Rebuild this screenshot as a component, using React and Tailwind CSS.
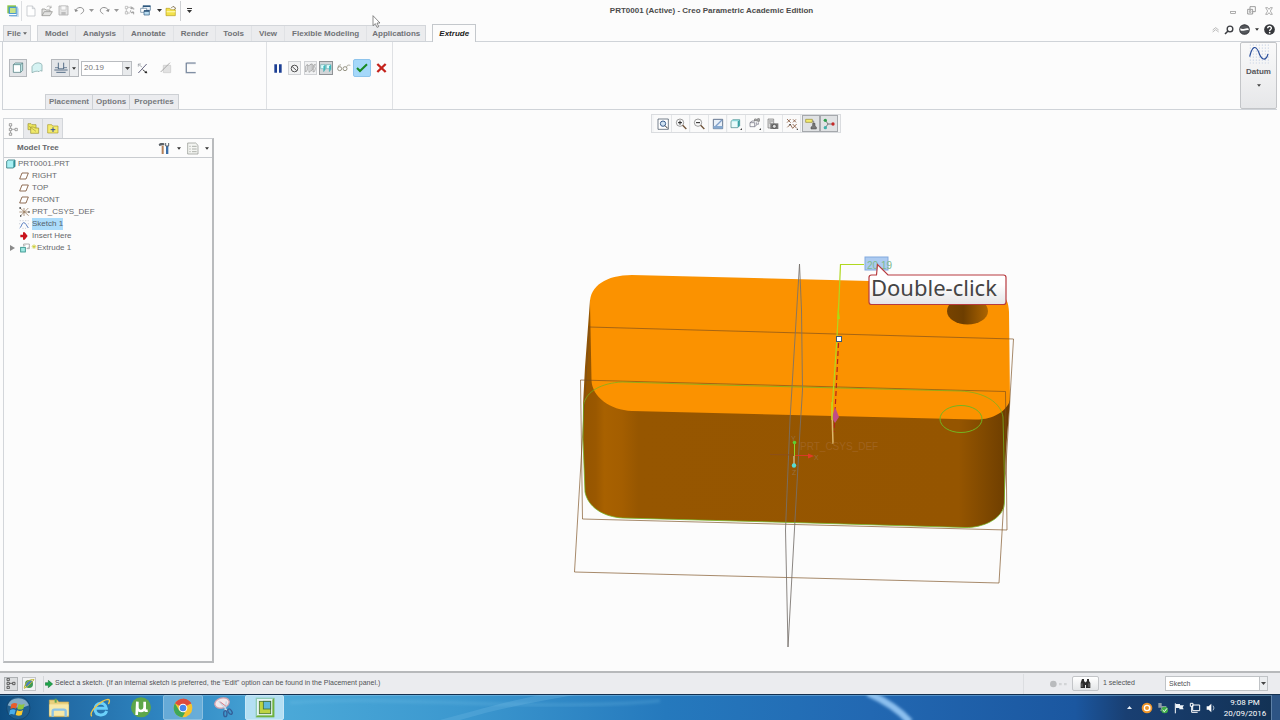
import React from "react";

function Icon({ w, h, box, children, className = "" }) {
  return (
    <svg width={w} height={h} viewBox={box || `0 0 ${w * 3} ${h * 3}`} className={`shrink-0 ${className}`} aria-hidden="true" fill="none">
      {children}
    </svg>
  );
}

function Caret({ color = "#333" }) {
  return (
    <Icon w={5} h={3} box="0 0 5 3">
      <path d="M0 0h5L2.5 3z" fill={color} />
    </Icon>
  );
}

function IconButton({ label, className = "", children }) {
  return (
    <button type="button" aria-label={label} className={`flex shrink-0 items-center justify-center ${className}`}>
      {children}
    </button>
  );
}

const AppIcon = () => (
  <Icon w={12} h={12}>
    <rect x="1" y="1" width="26" height="24" fill="#8cc63f" />
    <rect x="5" y="5" width="24" height="22" fill="#4a9ad4" />
    <rect x="9" y="9" width="17" height="15" fill="#c6e48a" />
    <path d="M30 5v27H6" stroke="#5b9bd0" strokeWidth="3" />
    <path d="M34 10v25H10" stroke="#a9cbe6" strokeWidth="2" />
  </Icon>
);

const NewIcon = () => (
  <Icon w={10} h={12}>
    <path d="M3 3h16l8 8v22H3zM19 3v8h8" stroke="#c2c5ca" strokeWidth="2.5" fill="#fff" />
  </Icon>
);
const OpenIcon = () => (
  <Icon w={12} h={12}>
    <path d="M3 32V12h9l3 3h12v5M3 32l7-12h24l-7 12z" stroke="#9a9a98" strokeWidth="2.5" fill="#e2e2e0" />
    <path d="M17 6c5-5 11-3 13 3m0-7v7h-6" stroke="#9a9a98" strokeWidth="2" />
  </Icon>
);
const SaveIcon = () => (
  <Icon w={11} h={11}>
    <path d="M3 3h27v27H3z" fill="#e4e4e4" stroke="#b0b0b0" strokeWidth="2.5" />
    <path d="M9 3h15v12H9z" fill="#f8f8f8" stroke="#b5b5b5" strokeWidth="1.5" />
    <path d="M10 21h13v9H10z" fill="#bdbdbd" />
  </Icon>
);
const UndoIcon = () => (
  <Icon w={11} h={9}>
    <path d="M4 14C10 1 28 2 29 13c0 6-5 8-9 11" stroke="#8c8c8c" strokeWidth="3" />
    <path d="M1 8l3 10 9-4z" fill="#8c8c8c" />
  </Icon>
);
const RedoIcon = () => (
  <Icon w={11} h={9}>
    <path d="M29 14C23 1 5 2 4 13c0 6 5 8 9 11" stroke="#8c8c8c" strokeWidth="3" />
    <path d="M32 8l-3 10-9-4z" fill="#8c8c8c" />
  </Icon>
);
const RegenIcon = () => (
  <Icon w={11} h={11}>
    <path d="M4 4h7v7H4zM4 20h7v7H4zM11 7h7M7 11v9M11 24h7" stroke="#ababab" strokeWidth="2" />
    <path d="M20 10c6-6 11 0 9 4m-9 2c-3 6 3 10 8 6M21 4v7h6M29 28v-7h-6" stroke="#8f8f8f" strokeWidth="2.5" />
  </Icon>
);
const WindowsIcon = () => (
  <Icon w={12} h={11}>
    <path d="M9 2h22v14H9z" fill="#eef4fa" stroke="#3f6689" strokeWidth="2" />
    <path d="M9 4h22" stroke="#2c577e" strokeWidth="4" />
    <path d="M2 10h18v12H2z" fill="#fff" stroke="#5c7c96" strokeWidth="2" />
    <path d="M12 17h16v13H12z" fill="#b9dcf0" stroke="#2c577e" strokeWidth="2" />
    <path d="M12 18h16" stroke="#20486e" strokeWidth="4" />
  </Icon>
);
const FolderIcon = () => (
  <Icon w={12} h={12}>
    <path d="M3 10h11l3 4h14v18H3z" fill="#f3e24c" stroke="#b89f22" strokeWidth="2" />
    <path d="M5 20h26" stroke="#fdf6a0" strokeWidth="4" />
    <path d="M18 10l6-6 8 5-4 5" stroke="#77653c" strokeWidth="2.5" />
  </Icon>
);

const menuTabs = ["Model", "Analysis", "Annotate", "Render", "Tools", "View", "Flexible Modeling", "Applications"];

function TitleBar() {
  return (
    <header className="flex h-6 shrink-0 items-center pb-[3px] pl-[7px]">
      <div className="flex flex-1 items-center">
        <AppIcon />
        <span className="mr-px ml-0.5 h-5 w-px bg-[#dcdee1]" />
        <IconButton label="New" className="w-4"><NewIcon /></IconButton>
        <IconButton label="Open" className="w-4"><OpenIcon /></IconButton>
        <IconButton label="Save" className="w-4"><SaveIcon /></IconButton>
        <IconButton label="Undo" className="w-4"><UndoIcon /></IconButton>
        <IconButton label="Undo list" className="w-[9px]"><Caret color="#999" /></IconButton>
        <IconButton label="Redo" className="w-4"><RedoIcon /></IconButton>
        <IconButton label="Redo list" className="w-[9px]"><Caret color="#999" /></IconButton>
        <IconButton label="Regenerate" className="w-4"><RegenIcon /></IconButton>
        <IconButton label="Windows" className="w-[18px]"><WindowsIcon /></IconButton>
        <IconButton label="Windows list" className="w-2"><Caret /></IconButton>
        <IconButton label="Close" className="w-4"><FolderIcon /></IconButton>
        <span className="mr-1 ml-px h-5 w-px bg-[#cfd1d4]" />
        <IconButton label="Customize toolbar" className="w-2">
          <Icon w={5} h={5} box="0 0 5 5"><path d="M0 .5h5" stroke="#333" /><path d="M0 2h5L2.500 5z" fill="#333" /></Icon>
        </IconButton>
      </div>
      <h1 className="pl-[140px] text-[8px] font-bold text-[#4b4b4b]">PRT0001 (Active) - Creo Parametric Academic Edition</h1>
      <div className="flex flex-1 items-center justify-end gap-1 pr-1">
        <IconButton label="Minimize" className="w-3.5">
          <Icon w={6} h={10} box="0 0 18 30"><rect x="2" y="16" width="14" height="6" stroke="#888" strokeWidth="2" /></Icon>
        </IconButton>
        <IconButton label="Restore" className="w-3.5">
          <Icon w={9} h={9}><path d="M9 2h16v15H9z" fill="#fff" stroke="#888" strokeWidth="2.500" /><path d="M2 10h15v14H2z" fill="#fff" stroke="#888" strokeWidth="2.500" /><path d="M7 14h5v5H7z" stroke="#888" strokeWidth="2" /></Icon>
        </IconButton>
        <IconButton label="Close window" className="w-3.5">
          <Icon w={8} h={8}><path d="M2 2h6l4 5 4-5h6l-6 10 6 10h-6l-4-5-4 5H2l6-10z" fill="#fff" stroke="#888" strokeWidth="2" /></Icon>
        </IconButton>
      </div>
    </header>
  );
}

function MenuRow() {
  return (
    <div className="flex h-[18px] shrink-0 items-end text-[8px] font-bold text-[#707276]">
      <div className="flex h-[18px] flex-1 items-end border-b border-[#cfd3d8] pl-[3px]">
        <button type="button" className="flex h-4 w-7 items-center justify-center gap-[2px] border border-b-0 border-[#d3d6da] bg-[#ebecee]">
          File <Icon w={4} h={3} box="0 0 5 3"><path d="M0 0h5L2.500 3z" fill="#666" /></Icon>
        </button>
        <nav className="ml-1.5 flex h-4 border border-b-0 border-[#d3d6da] bg-[#ebecee]">
          {menuTabs.map((t) => (
            <button type="button" key={t} className="border-r border-[#e0e2e5] px-[7px] last:border-r-0 last:px-[5px]">{t}</button>
          ))}
        </nav>
        <button type="button" className="-mb-px ml-1.5 h-[18px] w-11 border border-b-0 border-[#c4c8cc] bg-[#fcfcfc] text-[#222] italic">Extrude</button>
      </div>
      <div className="flex h-[18px] items-center gap-[3px] border-b border-[#cfd3d8] pr-[5px] pb-1.5">
        <IconButton label="Collapse ribbon" className="mr-px"><Icon w={8} h={6}><path d="M2 9l9-7 9 7M2 15l9-7 9 7" stroke="#999" strokeWidth="2" /></Icon></IconButton>
        <IconButton label="Search"><Icon w={10} h={10}><circle cx="18" cy="12" r="8.500" stroke="#3b3d42" strokeWidth="4" /><path d="M12 18l-9 9" stroke="#3b3d42" strokeWidth="5" /></Icon></IconButton>
        <IconButton label="Resources" className="ml-0.5"><Icon w={11} h={11}><circle cx="16.500" cy="16.500" r="14" stroke="#3b3d42" strokeWidth="4" fill="#55585c" /><path d="M4 13c8 6 17-4 25 1v5c-8-4-17 5-25 0z" fill="#fff" /></Icon></IconButton>
        <span className="mx-0.5"><Icon w={4} h={3} box="0 0 5 3"><path d="M0 0h5L2.500 3z" fill="#333" /></Icon></span>
        <IconButton label="Help"><Icon w={11} h={11}><circle cx="16.500" cy="16.500" r="16" fill="#36383c" /><path d="M11 13c0-8 12-7 11 0-1 4-5 4-5 8" stroke="#fff" strokeWidth="4" /><circle cx="17" cy="26" r="2.500" fill="#fff" /></Icon></IconButton>
      </div>
    </div>
  );
}

function Ribbon() {
  return (
    <section className="mr-[3px] ml-[2px] flex h-[68px] shrink-0 border-b border-l border-[#cfd3d8]">
      <div className="flex w-[264px] flex-col justify-between border-r border-[#dfe1e4] pt-4">
        <div className="flex h-5 items-center pl-1.5">
          <IconButton label="Extrude as solid" className="h-[18px] w-[18px] border border-[#b5b8bc] bg-[#e3e5e8]">
            <Icon w={12} h={12}><path d="M4 8l6-5h22v22l-6 6H4z" fill="#c8eff0" stroke="#4b7275" strokeWidth="2" /><path d="M4 8h22v23M26 8l6-5" stroke="#4b7275" strokeWidth="2" /><path d="M6 10h18v19H6z" fill="#fff" /></Icon>
          </IconButton>
          <IconButton label="Extrude as surface" className="ml-0.5 h-[18px] w-4">
            <Icon w={12} h={12}><path d="M3 14c8-14 24-14 30-6v20c-3-3-6-3-9 1-6-3-12-1-21 3z" fill="#d6f3f3" stroke="#7aa0a2" strokeWidth="2" /></Icon>
          </IconButton>
          <IconButton label="Depth option" className="ml-1.5 h-[18px] w-[19px] border border-[#b5b8bc] bg-[#e3e5e8]">
            <Icon w={14} h={12}><path d="M13 2v19M29 2v19M1 24h40M7 31h28" stroke="#3a5673" strokeWidth="2.500" /><path d="M13 20h16M3 17h10M29 17h10" stroke="#3a5673" strokeWidth="2" /></Icon>
          </IconButton>
          <IconButton label="Depth list" className="h-[18px] w-[9px] border border-l-0 border-[#b5b8bc] bg-[#eceef0]"><Icon w={4} h={3} box="0 0 5 3"><path d="M0 0h5L2.500 3z" fill="#333" /></Icon></IconButton>
          <div className="ml-0.5 flex h-[15px] w-[51px] border border-[#b9bcc0] bg-white">
            <input aria-label="Depth" defaultValue="20.19" className="w-0 flex-1 bg-transparent pl-[2px] text-[8px] text-[#777] outline-none" />
            <IconButton label="Recent depths" className="w-[9px] border-l border-[#c9ccd0] bg-[#e8eaec]"><Caret color="#444" /></IconButton>
          </div>
          <IconButton label="Flip direction" className="ml-1 w-3">
            <Icon w={11} h={11}><path d="M4 30L29 3" stroke="#446" strokeWidth="2.500" /><path d="M15 12L4 4m0 7V3h8" stroke="#8d9298" strokeWidth="2" /><path d="M17 20l10 8" stroke="#222" strokeWidth="2.500" /><path d="M31 31l-9-1 6-7z" fill="#222" /></Icon>
          </IconButton>
          <IconButton label="Remove material" className="ml-3 w-3">
            <Icon w={12} h={12}><path d="M10 10h22v22H10z" fill="#e2e2e2" stroke="#c9c9c9" strokeWidth="2" /><path d="M2 30L30 2" stroke="#8a8a8a" strokeWidth="2" /></Icon>
          </IconButton>
          <IconButton label="Thicken sketch" className="ml-3 w-3">
            <Icon w={11} h={12}><path d="M32 4H3v28h29" stroke="#d8dade" strokeWidth="5" /><path d="M32 3H4v29h28" stroke="#5a6f8c" strokeWidth="2.500" /></Icon>
          </IconButton>
        </div>
        <div className="ml-[42px] flex h-[15px] self-start border border-b-0 border-[#cdd0d4] bg-[#ebecef] text-[8px] font-bold text-[#777a7e]">
          <button type="button" className="px-[3px]">Placement</button>
          <button type="button" className="border-x border-[#cdd0d4] px-[3px]">Options</button>
          <button type="button" className="px-1">Properties</button>
        </div>
      </div>
      <div className="flex w-[126px] items-start border-r border-[#dfe1e4] pt-4 pl-[3px]">
        <div className="flex h-5 items-center">
          <IconButton label="Pause" className="w-4"><Icon w={8} h={9}><path d="M1 1h8v25H1zM15 1h8v25h-8z" fill="#1c3f94" /></Icon></IconButton>
          <IconButton label="No preview" className="ml-0.5 h-3.5 w-[13px] border border-[#d0d2d5] bg-[#f1f2f3]"><Icon w={9} h={9}><circle cx="13.500" cy="13.500" r="10" stroke="#555" strokeWidth="3" /><path d="M6 7l14 13" stroke="#555" strokeWidth="3" /></Icon></IconButton>
          <IconButton label="Unattached preview" className="ml-[3px] h-3.5 w-[13px] border border-[#d0d2d5] bg-[#f1f2f3]"><Icon w={11} h={10}><path d="M2 10l5-6v17l-5 6zM12 8l6-5v20l-6 5zM12 8H8M18 3h4v18l-4 3M26 6l5-2-2 7 2 5-2 9-5 2z" stroke="#777" strokeWidth="1.500" /></Icon></IconButton>
          <IconButton label="Attached preview" className="ml-[2px] h-3.5 w-[14px] border border-[#8f9295] bg-[#d2d5d8]"><Icon w={12} h={10}><path d="M2 5h14v14l-5 7v-9H2zM19 5h14v14l-5 7v-9h-9z" fill="#dff" stroke="#4a9a9d" strokeWidth="1.500" /><path d="M10 10l6-5v14l-5 7zM27 10l6-5v14l-5 7z" fill="#3fb8bd" /></Icon></IconButton>
          <IconButton label="Verify" className="ml-1 w-[14px]"><Icon w={14} h={8}><circle cx="8" cy="14" r="6" stroke="#83806e" strokeWidth="2.500" /><circle cx="24" cy="14" r="6" stroke="#83806e" strokeWidth="2.500" /><path d="M3 10C5 2 9 2 12 3M29 10c1-8 5-7 11-6" stroke="#83806e" strokeWidth="2" /></Icon></IconButton>
          <IconButton label="Accept" className="ml-0.5 h-[18px] w-[18px] rounded-xs border border-[#8ec4ec] bg-[#a5d8fa]"><Icon w={12} h={10}><path d="M3 15l9 9L33 4" stroke="#178a22" strokeWidth="6" /></Icon></IconButton>
          <IconButton label="Cancel" className="ml-1 w-3"><Icon w={11} h={10}><path d="M4 3l25 24M29 3L4 27" stroke="#c4221c" strokeWidth="7" /></Icon></IconButton>
        </div>
      </div>
      <div className="flex-1" />
      <button type="button" className="flex w-[37px] flex-col items-center rounded-xs border border-[#c3c5c8] bg-linear-to-b from-[#fafafa] to-[#e6e7e9] pt-px text-[8px] font-bold text-[#55575a]">
        <Icon w={20} h={20}>
          {[4, 13, 22, 31, 40, 49, 58].map((x) => (
            <path key={x} d={`M${x} 2v56`} stroke="#9db3d6" strokeWidth="2.500" strokeDasharray="2.500 6.500" />
          ))}
          <path d="M2 38C10 4 20 4 29 24c8 26 22 28 28 6" stroke="#2b4f9c" strokeWidth="3.500" />
        </Icon>
        <span className="mt-0.5 h-3 leading-3">Datum</span>
        <span className="mt-1.5"><Icon w={4} h={3} box="0 0 5 3"><path d="M0 0h5L2.500 3z" fill="#444" /></Icon></span>
      </button>
    </section>
  );
}

const PartIcon = () => (
  <Icon w={10} h={10}><path d="M2 7l5-4h20v19l-5 5H2z" fill="#a8f0f4" stroke="#33797e" strokeWidth="2.500" /><path d="M22 27V7l5-4v19z" fill="#2f8f97" /></Icon>
);
const PlaneIcon = () => (
  <Icon w={10} h={8}><path d="M9 3h19l-7 18H2z" fill="#fff" stroke="#7c5335" strokeWidth="2.500" /></Icon>
);
const CsysIcon = () => (
  <Icon w={11} h={10}><path d="M3 3l26 23M4 27L28 3M1 15h30M15 3v24" stroke="#8d6b48" strokeWidth="2" /><path d="M1 3h5M28 15h4M3 27h4" stroke="#444" strokeWidth="4" /></Icon>
);
const SketchIcon = () => (
  <Icon w={10} h={9}><path d="M2 2h4m4 0h4m4 0h4m4 0h3M2 9v4M28 9v4M10 25h4m4 0h3" stroke="#b8bec8" strokeWidth="2" /><path d="M2 24C8 22 8 8 14 8s8 8 14 16" stroke="#3a66b5" strokeWidth="2.500" /></Icon>
);
const InsertIcon = () => (
  <Icon w={8} h={8}><path d="M1 8h8V1h5l9 11-9 11H9v-7H1z" fill="#c8141d" /></Icon>
);
const ExtrudeIcon = () => (
  <Icon w={10} h={10}><path d="M11 9V3h17v14h-6" fill="#fff" stroke="#888" strokeWidth="2" /><path d="M11 11l6-6M20 18l7-7" stroke="#777" strokeWidth="1.500" /><rect x="2" y="13" width="14" height="14" fill="#9fe8e2" stroke="#2c8f86" strokeWidth="2.500" /></Icon>
);

const treeItems = [
  ["RIGHT", PlaneIcon],
  ["TOP", PlaneIcon],
  ["FRONT", PlaneIcon],
  ["PRT_CSYS_DEF", CsysIcon],
  ["Sketch 1", SketchIcon],
  ["Insert Here", InsertIcon],
];

function ModelTree() {
  return (
    <aside className="flex w-[211px] shrink-0 flex-col">
      <div className="flex h-5 w-[60px] border border-b-0 border-[#d3d6da] bg-[#e9eaed]">
        <IconButton label="Model tree" className="h-5 flex-1 bg-[#fcfcfc]"><Icon w={10} h={13}><path d="M4 2h7v7H4zM4 16h7v7H4zM4 30h7v7H4zM21 16h7v7h-7z" stroke="#777" strokeWidth="2" /><path d="M7.500 9v7m0 7v7M11 19h10" stroke="#888" strokeWidth="2" /></Icon></IconButton>
        <IconButton label="Folder browser" className="flex-1 border-x border-[#d3d6da]"><Icon w={13} h={13}><path d="M3 5h9l3 3h12v15H3z" fill="#ece75e" stroke="#9a8f2f" strokeWidth="2" /><path d="M11 15h9l3 3h12v16H11z" fill="#f0e96a" stroke="#9a8f2f" strokeWidth="2" /><path d="M5 12l22 16" stroke="#a79b39" strokeWidth="2" /></Icon></IconButton>
        <IconButton label="Favorites" className="flex-1"><Icon w={12} h={11}><path d="M2 5h12l3 4h16v21H2z" fill="#f5ec6d" stroke="#ab9a2a" strokeWidth="2" /><path d="M18 13v14M11 20h14" stroke="#3450a0" strokeWidth="3" /></Icon></IconButton>
      </div>
      <div className="flex flex-1 flex-col border-t border-r-2 border-b-2 border-l border-t-[#c9ccd0] border-r-[#b9bbbd] border-b-[#b9bbbd] border-l-[#d3d6da]">
        <div className="flex h-[19px] shrink-0 items-center border-b border-[#c9ccd0] pr-[3px] pl-[13px]">
          <h2 className="flex-1 text-[8px] font-bold text-[#66686b]">Model Tree</h2>
          <IconButton label="Tree settings"><Icon w={13} h={13}><path d="M2 7c4-5 9-5 17-3v6h-6l-9 2z" fill="#5a6066" /><path d="M11 11h6v25h-6z" fill="#b5825b" /><path d="M24 12h7v24h-7z" fill="#3a6ea8" /><path d="M23 3v9h9V3" stroke="#59636c" strokeWidth="3" /></Icon></IconButton>
          <span className="ml-1.5"><Icon w={4} h={3} box="0 0 5 3"><path d="M0 0h5L2.500 3z" fill="#333" /></Icon></span>
          <IconButton label="Tree display" className="ml-1.5"><Icon w={12} h={13}><path d="M2 3h24l7 7v26H2z" fill="#f4f5f2" stroke="#8b8e88" strokeWidth="2" /><path d="M7 13h4m4 0h14M7 21h4m4 0h14M7 29h4m4 0h14" stroke="#8b8e88" strokeWidth="2" /></Icon></IconButton>
          <span className="ml-1.5"><Icon w={4} h={3} box="0 0 5 3"><path d="M0 0h5L2.500 3z" fill="#333" /></Icon></span>
        </div>
        <ul className="text-[8px] leading-3 text-[#66686b]">
          <li className="flex h-3 items-center gap-[2px] pl-0.5"><PartIcon />PRT0001.PRT</li>
          {treeItems.map(([name, Glyph]) => (
            <li key={name} className="flex h-3 items-center pl-3.5">
              <span className="mr-0.5 flex w-3 shrink-0 justify-center"><Glyph /></span>
              <span className={name === "Sketch 1" ? "bg-[#abdcfb] text-[#56616c]" : ""}>{name}</span>
            </li>
          ))}
          <li className="flex h-3 items-center pl-1.5">
            <Icon w={5} h={6} box="0 0 5 6"><path d="M0 0l5 3-5 3z" fill="#8a8a8a" /></Icon>
            <span className="ml-[5px] flex"><ExtrudeIcon /></span>
            <Icon w={6} h={9} className="ml-px"><path d="M9 1v14M2 8h14M4 3l10 10M14 3L4 13" stroke="#c5c822" strokeWidth="2" /></Icon>
            <span>Extrude 1</span>
          </li>
        </ul>
      </div>
    </aside>
  );
}

const viewTools = [
  ["Refit", <><path d="M3 3h31v31H3z" stroke="#345" strokeWidth="2" fill="#fff" /><circle cx="18" cy="17" r="8" stroke="#3b5f8e" strokeWidth="3" fill="#cfe2f2" /><path d="M24 23l8 8" stroke="#333" strokeWidth="3" /></>],
  ["Zoom in", <><circle cx="15" cy="14" r="11" stroke="#888" strokeWidth="2.500" /><path d="M9 14h12M15 8v12" stroke="#222" strokeWidth="3" /><path d="M23 22l11 11" stroke="#6f5136" strokeWidth="4" /></>],
  ["Zoom out", <><circle cx="15" cy="14" r="11" stroke="#888" strokeWidth="2.500" /><path d="M9 14h12" stroke="#222" strokeWidth="3" /><path d="M23 22l11 11" stroke="#6f5136" strokeWidth="4" /></>],
  ["Repaint", <><path d="M4 4h28v28H4z" fill="#e9f0f8" stroke="#4a5f7c" strokeWidth="2.500" /><path d="M4 24h28v8H4z" fill="#86a9d0" /><path d="M30 6L11 25" stroke="#7f9fc9" strokeWidth="4" /></>],
  ["Display style", <><path d="M3 10l6-5h20v18l-6 6H3z" fill="#e8fbfb" stroke="#3d7f81" strokeWidth="2" /><path d="M23 10l6-5v18l-6 6z" fill="#38a2a5" /><path d="M3 10l6-5h20l-6 5z" fill="#88d4d6" /><path d="M36 36h-6l6-6z" fill="#444" /></>],
  ["Saved orientations", <><path d="M3 14h14v12H3zM3 14l6-5h8M22 20v-7M17 26l8-7h3v-6" stroke="#667" strokeWidth="2" /><path d="M17 10V3h5v7M17 7h5M26 2v8h5V2zM26 6h5" stroke="#555" strokeWidth="2" /><path d="M36 36h-6l6-6z" fill="#444" /></>],
  ["View manager", <><path d="M3 3h17v27H3z" fill="#ddd" stroke="#777" strokeWidth="2" /><path d="M6 9h12M6 15h6" stroke="#777" strokeWidth="2" /><path d="M10 16h24v17H10z" fill="#777" /><circle cx="22" cy="25" r="6" fill="#ddd" stroke="#333" strokeWidth="2" /></>],
  ["Datum display", <><path d="M3 3l11 11M14 3L3 14M21 4l9 9M30 4l-9 9M4 28l9-9 7 12M20 18l12 13M32 18L20 31" stroke="#84563b" strokeWidth="2.500" /><path d="M10 20h4" stroke="#333" strokeWidth="4" /><path d="M36 36h-5l5-5z" fill="#444" /></>],
  ["Annotation display", <><path d="M2 4h20v9H2z" fill="#f3ec6e" stroke="#948a30" strokeWidth="2" /><path d="M22 9h4v12" stroke="#666" strokeWidth="2" /><path d="M23 16h7v8l4 3v6H18v-6l5-3z" fill="#777" stroke="#444" strokeWidth="1.500" /></>],
  ["Spin center", <><path d="M8 8l7 10-7 10M15 18h16" stroke="#444" strokeWidth="2" /><circle cx="7" cy="7" r="5" fill="#2f9d4c" /><circle cx="7" cy="29" r="5" fill="#3fb0aa" /><circle cx="30" cy="18" r="5" fill="#c52828" /></>],
];

function Scene() {
  return (
    <svg viewBox="214 140 1066 531" className="min-h-0 w-full flex-1" role="img" aria-label="Extruded block with dimension 20.19">
      <defs>
        <linearGradient id="side" gradientUnits="userSpaceOnUse" x1="583" y1="0" x2="1010" y2="0">
          <stop offset="0" stopColor="#945500" />
          <stop offset="0.030" stopColor="#9a5800" />
          <stop offset="0.050" stopColor="#a86100" />
          <stop offset="0.090" stopColor="#a45e00" />
          <stop offset="0.130" stopColor="#965600" />
          <stop offset="0.880" stopColor="#955500" />
          <stop offset="0.940" stopColor="#804900" />
          <stop offset="1" stopColor="#6b3c00" />
        </linearGradient>
        <linearGradient id="hole" x1="0" x2="1" y1="0" y2="0">
          <stop offset="0" stopColor="#774300" />
          <stop offset="0.400" stopColor="#6d3e00" />
          <stop offset="1" stopColor="#ae6500" />
        </linearGradient>
        <linearGradient id="note" x1="0" x2="0" y1="0" y2="1">
          <stop offset="0.500" stopColor="#fff" />
          <stop offset="1" stopColor="#e4e4e6" />
        </linearGradient>
      </defs>
      <path d="M590 300L585 367L583 405L583 440L585 492C588 507 603 517 623 518L810 523L965 527.500C984 528 1004 518 1004 503L1006 450L1010 400L990 350Z" fill="url(#side)" />
      <path d="M590 303C590 286 606 275 632 275L870 281L975 284C996 285 1009 294 1009 312L1010 400C1007 411 993 420 975 419.500L632 411C610 410 592 397 591.500 380Z" fill="#fb9200" />
      <ellipse cx="967.500" cy="311" rx="20.500" ry="13.500" fill="url(#hole)" />
      <g fill="none" strokeWidth="1">
        <path d="M589 327L1013.500 339L999 583L574.500 572Z" stroke="#7a4d1d" strokeOpacity=".65" />
        <path d="M580.500 380L1005.500 391.500L1007 530L582.500 519Z" stroke="#7a4d1d" strokeOpacity=".65" />
        <path d="M799.500 264L801.500 310L802.500 390L800 430L795 520L788 647L785.500 530L790 420Z" stroke="#77716c" strokeOpacity=".85" />
        <path d="M585 492L583 440L583.500 405C586 391 602 383 622 382L720 385L960 391C985 392 1001 403 1003 417L1004.500 480V503C1004 518 984 528 965 527.500L810 523L623 518C603 517 588 507 585 492" stroke="#73b522" strokeOpacity=".75" />
        <ellipse cx="961" cy="419" rx="21" ry="13.500" stroke="#73b522" />
        <path d="M838.500 343L834 432" stroke="#b52318" strokeWidth="1.200" strokeDasharray="5 3" />
        <path d="M864 264.500H840.500L838.500 310L836.500 345L832 410" stroke="#b0d820" strokeWidth="1.200" />
        <path d="M832 410L833 444" stroke="#ddb76c" strokeWidth="1.500" />
        <path d="M770 454.500L795 455" stroke="#8d5019" />
        <path d="M795 455.500H812" stroke="#d83a25" />
        <path d="M794.500 443V456" stroke="#91d62d" />
        <path d="M794 456V466" stroke="#e5e0bf" />
      </g>
      <path d="M838 305l2 14h-3z" fill="#aed811" />
      <path d="M835 407L832 418L835 423L839 417Z" fill="#c04e87" />
      <path d="M832 402v18" stroke="#c7d51a" strokeWidth="1.500" />
      <path d="M808 453.500l6 2.500-6 2.500z" fill="#df3c24" />
      <circle cx="794.500" cy="442.500" r="1.800" fill="#5ad034" />
      <circle cx="794" cy="465.500" r="2.200" fill="#55dcd4" />
      <rect x="836.500" y="336.500" width="5" height="5" fill="#fff" stroke="#3a5a78" />
      <g fontFamily="Liberation Sans, sans-serif">
        <g fontSize="7" fill="#99703f"><text x="791" y="441">Y</text><text x="814" y="460">X</text><text x="792" y="475">Z</text></g>
        <text x="800" y="450" fontSize="10" fill="#a0631e">PRT_CSYS_DEF</text>
        <rect x="865" y="257" width="23" height="13" fill="#adcbf1" stroke="#82a9de" />
        <text x="867" y="269" fontSize="10" fill="#7db98c">20.19</text>
      </g>
      <path d="M871.500 275H876.500L877.500 264.500L888 275H1003.500Q1006 275 1006 277.500V302Q1006 304.500 1003.500 304.500H871.500Q869 304.500 869 302V277.500Q869 275 871.500 275Z" fill="url(#note)" stroke="#b73b40" strokeWidth="1.200" />
      <text x="871" y="296" fontFamily="Noto Sans, Open Sans, sans-serif" fontSize="22" fill="#454545">Double-click</text>
    </svg>
  );
}

function Workspace() {
  return (
    <main className="flex min-h-0 flex-1 pl-[3px]">
      <div className="flex pt-2 pb-2"><ModelTree /></div>
      <section className="flex min-w-0 flex-1 flex-col pt-1">
        <div className="mr-0.5 flex h-[19px] w-[190px] shrink-0 justify-between self-center border border-[#dadcdf] bg-[#f4f5f6] px-0.5">
          {viewTools.map(([name, art], i) => (
            <IconButton key={name} label={name} className={i > 7 ? "w-[18px] border border-[#a5a8ac] bg-[#e0e2e4]" : "w-[18px] border-r border-[#e3e5e7] bg-[#fafafa]"}>
              <Icon w={12} h={12}>{art}</Icon>
            </IconButton>
          ))}
        </div>
        <div className="flex min-h-0 flex-1 pt-[7px]"><Scene /></div>
      </section>
    </main>
  );
}

function StatusBar() {
  return (
    <div className="flex h-[23px] shrink-0 items-center border-t-2 border-[#b7b9bb] bg-[#ebecef] text-[7px] text-[#505255]">
      <IconButton label="Toggle navigator" className="ml-1 h-3.5 w-3.5 border border-[#aeb1b4] bg-[#dcdee0]"><Icon w={10} h={11}><path d="M3 1h7v7H3zM3 13h7v7H3zM3 25h7v7H3zM20 13h7v7h-7zM10 16h10" stroke="#444" strokeWidth="2.500" /></Icon></IconButton>
      <IconButton label="Toggle browser" className="ml-1 h-3.5 w-3.5 border border-[#c3c5c8] bg-[#f2f3f4]"><Icon w={12} h={12}><circle cx="18" cy="18" r="12" fill="#3f9a55" /><path d="M7 22c4-12 15-16 23-12-5 1-12 8-15 16z" fill="#4b82bd" /><path d="M4 29C6 13 20 3 33 5 26 12 17 25 4 31z" stroke="#bdb52c" strokeWidth="3" /></Icon></IconButton>
      <span className="mr-px ml-[7px] h-4 w-px bg-[#d5d7da]" />
      <Icon w={8} h={8}><path d="M1 8h9V1l13 11-13 11v-7H1z" fill="#1da64a" stroke="#0c6a2c" strokeWidth="1.500" /></Icon>
      <p className="ml-0.5 flex-1 whitespace-nowrap">Select a sketch. (If an internal sketch is preferred, the "Edit" option can be found in the Placement panel.)</p>
      <span className="h-5 w-px bg-[#dcdee1]" />
      <Icon w={18} h={8} className="ml-[26px]"><circle cx="10" cy="12" r="10" fill="#b9bbbd" /><path d="M27 9h8v7h-8zM42 9h8v7h-8z" fill="#d2d4d6" /></Icon>
      <button type="button" aria-label="Find" className="ml-1 flex h-[15px] w-[27px] items-center justify-center rounded-xs border border-[#c3c5c8] bg-linear-to-b from-white to-[#e4e6e8]">
        <Icon w={11} h={11}><path d="M6 3h6v6l3 3v18H2V15zM21 3h6v6l4 6v15H18V12l3-3zM13 13h6v8h-6z" fill="#2d2d2d" /><path d="M6 16v11M27 16v11" stroke="#999" strokeWidth="2" /></Icon>
      </button>
      <span className="ml-1 w-[62px]">1 selected</span>
      <div className="relative mr-3 flex w-[103px]">
        <select aria-label="Selection filter" className="h-[15px] flex-1 appearance-none border border-[#c0c3c6] bg-white py-0 pl-[3px] text-[7px] leading-[13px] outline-none"><option>Sketch</option></select>
        <span className="pointer-events-none absolute inset-y-0 right-0 flex w-[9px] items-center justify-center border border-[#c0c3c6] bg-[#eceef0]"><Caret color="#444" /></span>
      </div>
    </div>
  );
}

function Taskbar() {
  return (
    <footer className="relative flex h-[26px] shrink-0 items-center overflow-hidden border-t border-[#14304f] bg-[#2579bd] pl-[5px]">
      <svg className="absolute inset-0 h-full w-full" viewBox="0 0 1280 26" preserveAspectRatio="none" aria-hidden="true">
        <defs>
          <linearGradient id="bar"><stop offset="0" stopColor="#0d4c80" /><stop offset=".05" stopColor="#226ba5" /><stop offset=".13" stopColor="#2f86c2" /><stop offset=".22" stopColor="#4ba9d8" /><stop offset=".36" stopColor="#3c98cf" /><stop offset=".52" stopColor="#2579bd" /><stop offset=".68" stopColor="#2268b2" /><stop offset=".84" stopColor="#1b57a0" /><stop offset=".88" stopColor="#193f72" /><stop offset="1" stopColor="#123153" /></linearGradient>
          <filter id="soft" x="-20%" y="-50%" width="140%" height="200%"><feGaussianBlur stdDeviation="1.500" /></filter>
        </defs>
        <path d="M0 0h1280v26H0z" fill="url(#bar)" />
        <path d="M868 -2C885 6 898 14 910 28" stroke="#8cc0ef" strokeWidth="7" fill="none" filter="url(#soft)" />
        <path d="M460 26C500 14 540 6 575 0H540C500 8 470 18 440 26z" fill="#6fbbe4" opacity=".3" />
        <path d="M290 8C400 0 540 18 660 6" stroke="#7cc5ea" strokeWidth="3" opacity=".25" fill="none" filter="url(#soft)" />
        <path d="M0 .5h1280" stroke="#8fc4e4" opacity=".5" />
      </svg>
      <div className="relative flex h-full flex-1 items-center">
        <IconButton label="Start" className="w-[26px]">
          <Icon w={25} h={24}><circle cx="37" cy="36" r="35" fill="#1f5f90" stroke="#153f63" strokeWidth="2" /><path d="M5 28a34 32 0 0 1 64 0c-20 10-44 10-64 0z" fill="#a9c4d6" opacity=".75" /><path d="M16 25c6-5 12-5 18-2l-4 15c-6-3-11-2-17 1z" fill="#ea5c2c" /><path d="M38 24c6 3 11 3 18-1l-4 15c-6 3-12 4-18 1z" fill="#8fc63e" /><path d="M12 43c6-4 11-4 17-1l-4 14c-6-3-11-3-16 1z" fill="#4aaeea" /><path d="M33 43c6 3 12 3 18-1l-4 15c-6 3-12 3-18 0z" fill="#f9c931" /></Icon>
        </IconButton>
        <IconButton label="Explorer" className="ml-[15px] w-[26px]">
          <Icon w={22} h={20}><path d="M4 6h24l4 6h30v44H4z" fill="#e9d07d" stroke="#c9a84c" strokeWidth="2" /><path d="M20 2h6v12h-6z" fill="#65a84c" /><path d="M4 19h58v34H4z" fill="#f7e9a9" /><path d="M14 56V40q0-5 5-5h29q5 0 5 5v16" stroke="#8bc3e8" strokeWidth="7" /></Icon>
        </IconButton>
        <IconButton label="Internet Explorer" className="ml-[15px] w-[26px]">
          <Icon w={22} h={20}><path d="M53 39C47 55 20 56 18 34 17 12 50 9 52 31H22" stroke="#6bd0fa" strokeWidth="9" /><path d="M8 55C-2 40 38 6 57 4c7 0 4 10 1 14" stroke="#f0c545" strokeWidth="4" /></Icon>
        </IconButton>
        <IconButton label="Torrent client" className="ml-[15px] w-[26px]">
          <Icon w={22} h={21}><circle cx="33" cy="31" r="30" fill="#5da64a" /><path d="M22 14L20 54M22 14v17c0 15 22 14 22 0V14m0 18c0 9 3 10 9 9" stroke="#fff" strokeWidth="8" /></Icon>
        </IconButton>
        <IconButton label="Chrome" className="ml-[9px] h-[25px] w-10 rounded-xs border border-[#8bbfe0] bg-[#7eb9df]/70">
          <Icon w={20} h={20}><circle cx="30" cy="30" r="28" fill="#f4c430" /><path d="M30 30L5.800 16A28 28 0 0 1 54.200 16z" fill="#dd4b3e" /><path d="M30 2A28 28 0 0 1 54.200 16H30z" fill="#dd4b3e" /><path d="M5.800 16L18 37l18 7-8 14A28 28 0 0 1 5.800 16z" fill="#3fa757" /><path d="M30 16h24.200" stroke="#dd4b3e" strokeWidth="3" /><circle cx="30" cy="30" r="13" fill="#fff" /><circle cx="30" cy="30" r="10" fill="#4886ed" /></Icon>
        </IconButton>
        <IconButton label="Snipping tool" className="ml-[8px] w-[26px]">
          <Icon w={22} h={22}><ellipse cx="27" cy="18" rx="22" ry="15" transform="rotate(-15 27 18)" fill="#f3e9ec" stroke="#d3a1ac" strokeWidth="4" /><path d="M17 12l28 31M40 13L36 42" stroke="#c5d6e6" strokeWidth="4" /><path d="M22 15l16 12" stroke="#c7414e" strokeWidth="2" /><ellipse cx="37" cy="50" rx="5" ry="9" stroke="#345f98" strokeWidth="4" /><ellipse cx="51" cy="44" rx="5" ry="9" transform="rotate(-35 51 44)" stroke="#345f98" strokeWidth="4" /></Icon>
        </IconButton>
        <IconButton label="Creo" className="ml-[8px] h-[25px] w-[39px] rounded-xs border border-[#c7e7f7] bg-[#b4dff3]">
          <Icon w={20} h={21}><rect x="2" y="2" width="56" height="59" fill="#8fcbb3" /><path d="M2 61L58 2v59z" fill="#6fb23e" /><rect x="6" y="6" width="46" height="49" fill="#e6f5f4" /><rect x="13" y="13" width="34" height="37" fill="#bed443" stroke="#4a7a35" strokeWidth="2.500" /><rect x="25" y="13" width="22" height="23" fill="#5eb8db" stroke="#40713b" strokeWidth="2.500" /></Icon>
        </IconButton>
      </div>
      <div className="relative flex h-full items-center gap-1">
        <IconButton label="Show hidden icons" className="mr-1 w-2"><Icon w={5} h={3} box="0 0 5 3"><path d="M0 3h5L2.500 0z" fill="#e8eef5" /></Icon></IconButton>
        <Icon w={12} h={12}><circle cx="18" cy="18" r="16" fill="#f0962a" /><circle cx="18" cy="18" r="8" stroke="#fff" strokeWidth="4" /><path d="M26 11v14" stroke="#fff" strokeWidth="4" /></Icon>
        <Icon w={12} h={12}><path d="M4 3h10v14H4zM14 12h14v15H10z" fill="#8d9ba8" /><circle cx="23" cy="24" r="10" fill="#3fae49" /><path d="M17 24l5 5 8-10" stroke="#fff" strokeWidth="3" /></Icon>
        <Icon w={12} h={12}><path d="M7 4v30" stroke="#fff" strokeWidth="3" /><path d="M9 6h12v4h12l-4 6 3 6H19v-4H9z" fill="#eef3f8" /></Icon>
        <Icon w={12} h={12}><path d="M11 9h21v17H11z" stroke="#fff" strokeWidth="3" /><path d="M4 4h8v9H4zM8 13v18h18" stroke="#fff" strokeWidth="3" /></Icon>
        <Icon w={12} h={12}><path d="M5 13h6l8-8v26l-8-8H5z" fill="#fff" /><path d="M24 11q6 7 0 14" stroke="#cbd8e5" strokeWidth="2.500" /></Icon>
        <time className="ml-0.5 w-11 text-center font-[Roboto,sans-serif] text-[8px] leading-[11px] text-white">9:08 PM<br />20/09/2016</time>
        <button type="button" aria-label="Show desktop" className="h-full w-[9px] border-l border-[#5d80a6] bg-[#2d5484]" />
      </div>
    </footer>
  );
}

export default function App() {
  return (
    <div className="relative flex h-screen flex-col bg-[#fcfcfc] font-['Liberation_Sans',Arial,sans-serif]">
      <TitleBar />
      <MenuRow />
      <Ribbon />
      <Workspace />
      <StatusBar />
      <Taskbar />
      <svg width="9" height="13" viewBox="0 0 27 39" className="pointer-events-none absolute top-[15px] left-[372px]" aria-hidden="true">
        <path d="M3 2v30l7-6 5 11 5-2-5-11h9z" fill="#fff" stroke="#555" strokeWidth="2" />
      </svg>
    </div>
  );
}
